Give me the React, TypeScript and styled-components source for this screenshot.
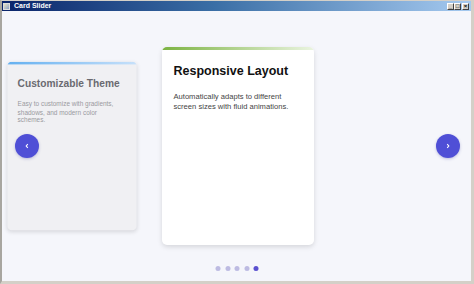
import React from "react";
import styled, { createGlobalStyle } from "styled-components";

const Global = createGlobalStyle`
  html, body { margin: 0; padding: 0; width: 474px; height: 284px; overflow: hidden; }
  body { font-family: "Liberation Sans", Arial, sans-serif; }
`;

const Window = styled.div`
  width: 474px;
  height: 284px;
  box-sizing: border-box;
  background: #d4d0c8;
  border-left: 2px solid #a8a6a0;
  border-right: 3px solid #d4d0c8;
  border-bottom: 3px solid #d4d0c8;
  border-top: 1px solid #d4d0c8;
  display: flex;
  flex-direction: column;
`;

const TitleBar = styled.div`
  height: 10px;
  flex: none;
  background: linear-gradient(90deg, #0a246a 0%, #3a6ea5 45%, #a6caf0 100%);
  display: flex;
  align-items: center;
  padding: 0 2px 0 1px;
  gap: 2px;
`;

const AppIcon = styled.div`
  width: 7px;
  height: 7px;
  background: linear-gradient(135deg, #e9e2c2, #8aa0c8);
  border: 1px solid #ddd;
  box-sizing: border-box;
`;

const TitleText = styled.span`
  color: #fff;
  font-weight: bold;
  font-size: 7px;
  line-height: 10px;
  flex: 1;
  padding-left: 2px;
`;

const CtrlGroup = styled.div`
  display: flex;
`;

const CtrlButton = styled.div<{ $gapLeft?: boolean }>`
  width: 7px;
  height: 7px;
  margin-left: ${(p) => (p.$gapLeft ? "1px" : "0")};
  background: #d4d0c8;
  border: 1px solid;
  border-color: #fff #404040 #404040 #fff;
  box-sizing: border-box;
  font-size: 6px;
  line-height: 5px;
  text-align: center;
  color: #000;
  font-weight: bold;
  overflow: hidden;
`;

const Content = styled.div`
  flex: 1;
  position: relative;
  background: #f5f6fb;
  display: flex;
  flex-direction: column;
  align-items: center;
  overflow: hidden;
`;

const Stage = styled.div`
  margin-top: 36px;
  height: 198px;
  width: 100%;
  display: flex;
  justify-content: center;
  align-items: center;
  gap: 14px;
  transform: translateX(-82px);
`;

const Card = styled.div<{ $side?: boolean }>`
  flex: none;
  width: 152px;
  height: 198px;
  box-sizing: border-box;
  border-radius: 5px;
  background: ${(p) => (p.$side ? "#f0f0f3" : "#ffffff")};
  box-shadow: 0 2px 5px rgba(0, 0, 0, 0.13);
  transform: ${(p) => (p.$side ? "scale(0.85)" : "none")};
  overflow: hidden;
  display: flex;
  flex-direction: column;
`;

const Accent = styled.div<{ $from: string; $to: string }>`
  height: 3px;
  flex: none;
  background: linear-gradient(90deg, ${(p) => p.$from}, ${(p) => p.$to});
`;

const CardBody = styled.div<{ $side?: boolean }>`
  padding: ${(p) => (p.$side ? "15px 12px" : "14px 12px")};
`;

const CardTitle = styled.h2<{ $side?: boolean }>`
  margin: 0 0 ${(p) => (p.$side ? "12px" : "13px")};
  font-size: ${(p) => (p.$side ? "12px" : "12.5px")};
  line-height: 15px;
  font-weight: bold;
  color: ${(p) => (p.$side ? "#6a6a70" : "#111")};
  white-space: nowrap;
`;

const CardText = styled.p<{ $side?: boolean }>`
  margin: 0;
  max-width: ${(p) => (p.$side ? "121px" : "none")};
  font-size: 7.6px;
  line-height: 9.5px;
  color: ${(p) => (p.$side ? "#9a9aa0" : "#444")};
`;

const NavButton = styled.button<{ $side: "left" | "right" }>`
  position: absolute;
  top: 123px;
  ${(p) => (p.$side === "left" ? "left: 13px;" : "right: 11px;")}
  width: 24px;
  height: 24px;
  border-radius: 50%;
  border: none;
  padding: 0;
  background: #4f4fd6;
  box-shadow: 0 1px 3px rgba(60, 60, 160, 0.3);
  color: #fff;
  display: flex;
  align-items: center;
  justify-content: center;
`;

const Dots = styled.div`
  margin-top: 21px;
  display: flex;
  gap: 4.5px;
  transform: translateX(0.5px);
`;

const Dot = styled.div<{ $active?: boolean }>`
  width: 5px;
  height: 5px;
  border-radius: 50%;
  background: ${(p) => (p.$active ? "#5a50cf" : "#bdbbe2")};
`;

const Chevron = ({ dir }: { dir: "left" | "right" }) => (
  <svg width="6" height="6" viewBox="0 0 6 6">
    <path
      d={dir === "left" ? "M3.8 1.2 L2.2 3 L3.8 4.8" : "M2.2 1.2 L3.8 3 L2.2 4.8"}
      fill="none"
      stroke="#fff"
      strokeWidth="1.1"
    />
  </svg>
);

const cards = [
  {
    title: "Customizable Theme",
    text: "Easy to customize with gradients, shadows, and modern color schemes.",
    from: "#64b0f0",
    to: "#c6e0fa",
    side: true,
  },
  {
    title: "Responsive Layout",
    text: "Automatically adapts to different screen sizes with fluid animations.",
    from: "#7cb342",
    to: "#eaf4e0",
    side: false,
  },
];

export default function App() {
  return (
    <>
      <Global />
      <Window>
        <TitleBar>
          <AppIcon />
          <TitleText>Card Slider</TitleText>
          <CtrlGroup>
            <CtrlButton>_</CtrlButton>
            <CtrlButton>□</CtrlButton>
            <CtrlButton $gapLeft>×</CtrlButton>
          </CtrlGroup>
        </TitleBar>
        <Content>
          <Stage>
            {cards.map((c) => (
              <Card key={c.title} $side={c.side}>
                <Accent $from={c.from} $to={c.to} />
                <CardBody $side={c.side}>
                  <CardTitle $side={c.side}>{c.title}</CardTitle>
                  <CardText $side={c.side}>{c.text}</CardText>
                </CardBody>
              </Card>
            ))}
          </Stage>
          <NavButton $side="left" aria-label="Previous">
            <Chevron dir="left" />
          </NavButton>
          <NavButton $side="right" aria-label="Next">
            <Chevron dir="right" />
          </NavButton>
          <Dots>
            {[0, 1, 2, 3, 4].map((i) => (
              <Dot key={i} $active={i === 4} />
            ))}
          </Dots>
        </Content>
      </Window>
    </>
  );
}
